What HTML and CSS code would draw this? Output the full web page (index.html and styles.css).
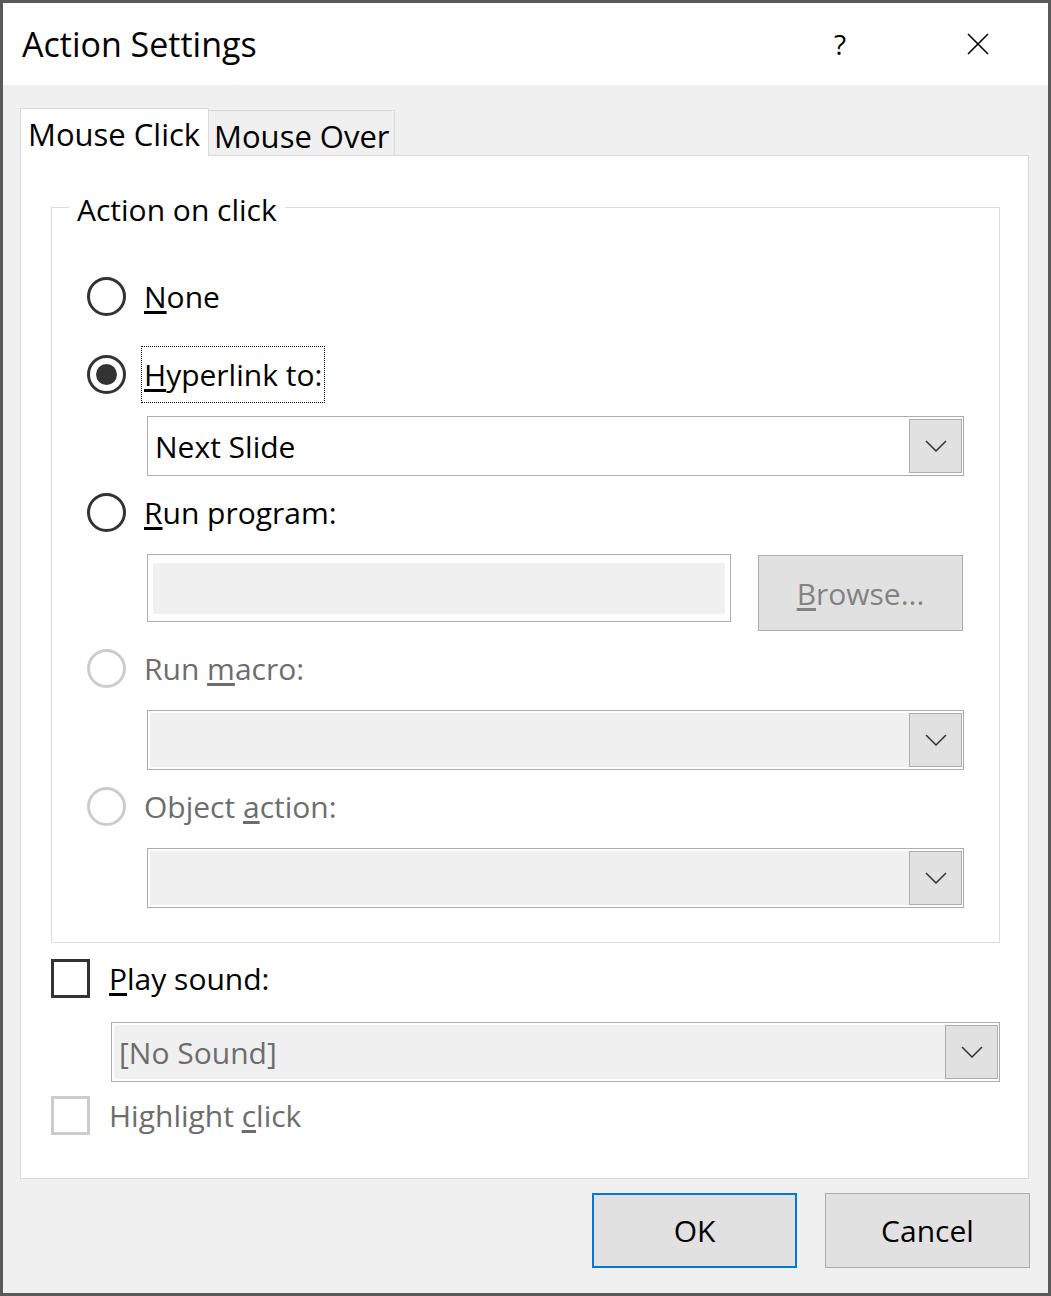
FILE: index.html
```html
<!DOCTYPE html>
<html lang="en">
<head>
  <meta charset="UTF-8" />
  <title>Action Settings</title>
  <link rel="stylesheet" href="styles.css">
</head>
<body>
  <div class="dialog">
    <header class="titlebar">
      <span class="title">Action Settings</span>
      <span class="help">?</span>
      <span class="close">
        <svg width="22" height="22" viewBox="0 0 22 22"><path d="M1 1L21 21M21 1L1 21" stroke="#000" stroke-width="1.6" fill="none"/></svg>
      </span>
    </header>

    <main class="content">
      <div class="tabs">
        <div class="tab active">Mouse Click</div>
        <div class="tab">Mouse Over</div>
      </div>

      <div class="panel">
        <fieldset class="group">
          <legend>Action on click</legend>
          <div class="options">
            <div class="radio-row">
              <span class="radio"></span>
              <span class="label"><u>N</u>one</span>
            </div>
            <div class="radio-row">
              <span class="radio checked"></span>
              <span class="label focus"><u>H</u>yperlink to:</span>
            </div>
            <div class="combo sub">
              <div class="combo-field">Next Slide</div>
              <span class="combo-btn"><svg width="22" height="12" viewBox="0 0 22 12"><path d="M1 1L11 11L21 1" stroke="#333" stroke-width="1.5" fill="none"/></svg></span>
            </div>
            <div class="radio-row">
              <span class="radio"></span>
              <span class="label"><u>R</u>un program:</span>
            </div>
            <div class="program-row sub">
              <div class="textbox"><div class="textbox-fill"></div></div>
              <div class="btn browse disabled"><span><u>B</u>rowse...</span></div>
            </div>
            <div class="radio-row disabled">
              <span class="radio"></span>
              <span class="label">Run <u>m</u>acro:</span>
            </div>
            <div class="combo sub disabled">
              <div class="combo-field"></div>
              <span class="combo-btn"><svg width="22" height="12" viewBox="0 0 22 12"><path d="M1 1L11 11L21 1" stroke="#333" stroke-width="1.5" fill="none"/></svg></span>
            </div>
            <div class="radio-row disabled">
              <span class="radio"></span>
              <span class="label">Object <u>a</u>ction:</span>
            </div>
            <div class="combo sub disabled">
              <div class="combo-field"></div>
              <span class="combo-btn"><svg width="22" height="12" viewBox="0 0 22 12"><path d="M1 1L11 11L21 1" stroke="#333" stroke-width="1.5" fill="none"/></svg></span>
            </div>
          </div>
        </fieldset>

        <div class="check-row">
          <span class="checkbox"></span>
          <span class="label"><u>P</u>lay sound:</span>
        </div>
        <div class="combo sound disabled">
          <div class="combo-field">[No Sound]</div>
          <span class="combo-btn"><svg width="22" height="12" viewBox="0 0 22 12"><path d="M1 1L11 11L21 1" stroke="#333" stroke-width="1.5" fill="none"/></svg></span>
        </div>
        <div class="check-row highlight disabled">
          <span class="checkbox"></span>
          <span class="label">Highlight <u>c</u>lick</span>
        </div>
      </div>

      <div class="buttons">
        <div class="btn default">OK</div>
        <div class="btn">Cancel</div>
      </div>
    </main>
  </div>
</body>
</html>
```

FILE: styles.css
```css
* {
  box-sizing: border-box;
}
body {
  margin: 0;
  font-family: "Open Sans", "Noto Sans", sans-serif;
  font-size: 30px;
  color: #000;
}
u {
  text-underline-offset: 3px;
}
.dialog {
  width: 1051px;
  height: 1296px;
  border: 3px solid #595959;
  background: #f0f0f0;
  display: flex;
  flex-direction: column;
}

/* title bar */
.titlebar {
  height: 82px;
  background: #fff;
  display: flex;
  align-items: center;
  padding: 0 45px 0 19px;
}
.title {
  flex: 1;
  font-size: 34px;
}
.help {
  width: 40px;
  margin-right: 93px;
  text-align: center;
  font-size: 28px;
}
.close {
  width: 50px;
  display: flex;
  justify-content: center;
}

/* body */
.content {
  flex: 1;
  display: flex;
  flex-direction: column;
  padding: 23px 19px 25px 17px;
}
.tabs {
  display: flex;
  align-items: flex-end;
  height: 47px;
}
.tab {
  height: 45px;
  padding: 5px 4px 0 5px;
  font-size: 31px;
  line-height: 40px;
  border: 1px solid #d9d9d9;
  border-bottom: none;
  white-space: nowrap;
}
.tab + .tab {
  border-left: none;
}
.tab.active {
  height: 48px;
  margin-bottom: -1px;
  padding: 5px 8px 0 7px;
  background: #fff;
  position: relative;
  z-index: 1;
}
.panel {
  flex: 1;
  background: #fff;
  border: 1px solid #d9d9d9;
  padding: 31px 28px 0 30px;
}

/* group box */
.group {
  margin: 0;
  min-width: 0;
  border: 1px solid #dcdcdc;
  padding: 0 35px 34px 17px;
}
.group legend {
  padding: 5px 8px 0;
  line-height: 36px;
}
.options {
  display: flex;
  flex-direction: column;
  padding: 40px 0 0 18px;
}
.radio-row {
  display: flex;
  align-items: center;
  height: 56px;
  line-height: 41px;
}
.radio-row + .radio-row {
  margin-top: 22px;
}
.radio {
  width: 39px;
  height: 39px;
  flex-shrink: 0;
  margin-right: 18px;
  border: 3px solid #333;
  border-radius: 50%;
  display: flex;
  align-items: center;
  justify-content: center;
}
.radio.checked::after {
  content: "";
  width: 21px;
  height: 21px;
  border-radius: 50%;
  background: #333;
}
.label.focus {
  padding: 7px 2px;
  margin-left: -2px;
  outline: 1px dotted #000;
}
.disabled .radio,
.disabled .checkbox {
  border-color: #cccccc;
}
.disabled .label,
.btn.disabled,
.combo.disabled .combo-field {
  color: #6d6d6d;
}
.sub {
  margin: 14px 0 8px 60px;
}
.options > :last-child {
  margin-bottom: 0;
}

/* combo boxes */
.combo {
  display: flex;
  height: 60px;
  border: 1px solid #adadad;
  padding: 2px 1px 2px 2px;
  background: #fff;
}
.combo-field {
  flex: 1;
  display: flex;
  align-items: center;
  padding-left: 5px;
  white-space: nowrap;
}
.combo.disabled .combo-field {
  background: #f0f0f0;
}
.combo-btn {
  width: 53px;
  border: 1px solid #adadad;
  background: #e1e1e1;
  display: flex;
  align-items: center;
  justify-content: center;
}

/* program path + browse */
.program-row {
  display: flex;
  align-items: flex-start;
  gap: 27px;
  height: 78px;
}
.textbox {
  flex: 1;
  height: 68px;
  border: 1px solid #adadad;
  padding: 8px 5px 7px;
  background: #fff;
}
.textbox-fill {
  height: 100%;
  background: #f0f0f0;
}
.btn {
  display: flex;
  align-items: center;
  justify-content: center;
  background: #e1e1e1;
  border: 1px solid #adadad;
}
.btn.browse {
  width: 205px;
  height: 76px;
  margin: 1px 1px 0 0;
}
.btn.disabled {
  color: #838383;
}

/* check boxes */
.check-row {
  display: flex;
  align-items: center;
  height: 39px;
  margin-top: 16px;
}
.check-row.highlight {
  margin-top: 14px;
}
.checkbox {
  width: 39px;
  height: 39px;
  flex-shrink: 0;
  margin-right: 19px;
  border: 3px solid #333;
}
.combo.sound {
  margin: 24px 0 0 60px;
}

/* dialog buttons */
.buttons {
  display: flex;
  justify-content: flex-end;
  gap: 28px;
  margin: 14px -1px 0 0;
}
.buttons .btn {
  width: 205px;
  height: 75px;
}
.btn.default {
  border: 2px solid #0078d7;
}
```
